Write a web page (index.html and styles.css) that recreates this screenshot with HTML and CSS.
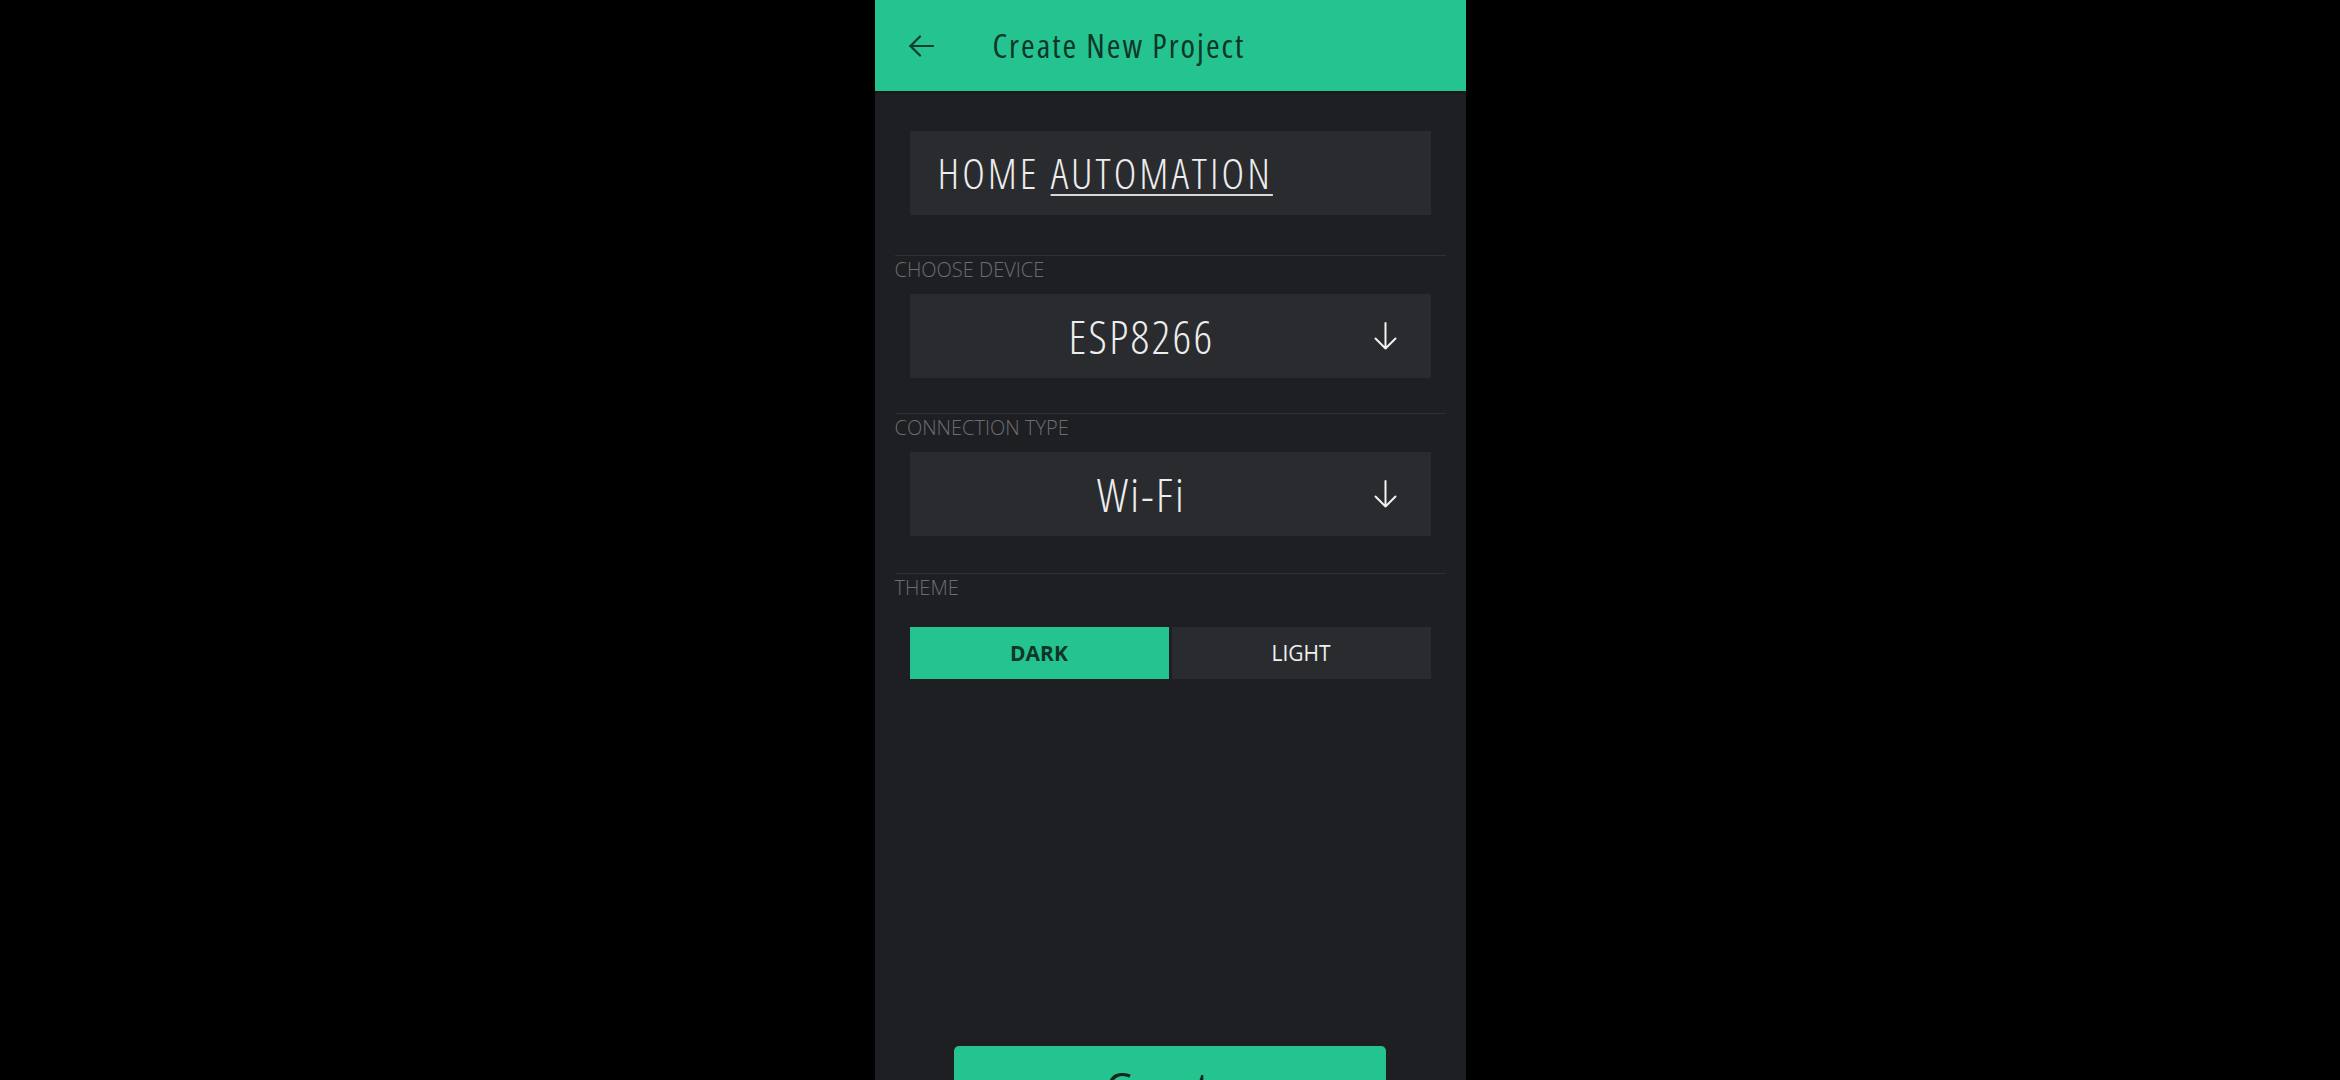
FILE: index.html
```html
<!DOCTYPE html>
<html lang="en">
<head>
<meta charset="utf-8">
<title>Create New Project</title>
<link rel="stylesheet" href="styles.css">
</head>
<body>
<div class="phone">
  <header class="appbar">
    <svg class="back" width="26" height="22" viewBox="0 0 26 22" aria-hidden="true">
      <path d="M25 11H2M12 1.5L2.5 11l9.5 9.5" fill="none" stroke="#0f3b2c" stroke-width="2.2" stroke-linecap="round" stroke-linejoin="round"/>
    </svg>
    <h1 class="title">Create New Project</h1>
  </header>

  <main class="content">
    <div class="field name-field"><span class="name-text">HOME <u class="auto">AUTOMATION</u></span></div>

    <section class="section">
      <div class="label">CHOOSE DEVICE</div>
      <div class="field select">
        <span class="select-text">ESP8266</span>
        <svg class="down" width="23" height="28" viewBox="0 0 23 28" aria-hidden="true">
          <path d="M11.5 1v25.5M1.5 16.5l10 10 10-10" fill="none" stroke="#f2f2f2" stroke-width="2" stroke-linecap="round" stroke-linejoin="round"/>
        </svg>
      </div>
    </section>

    <section class="section">
      <div class="label">CONNECTION TYPE</div>
      <div class="field select">
        <span class="select-text">Wi-Fi</span>
        <svg class="down" width="23" height="28" viewBox="0 0 23 28" aria-hidden="true">
          <path d="M11.5 1v25.5M1.5 16.5l10 10 10-10" fill="none" stroke="#f2f2f2" stroke-width="2" stroke-linecap="round" stroke-linejoin="round"/>
        </svg>
      </div>
    </section>

    <section class="section last">
      <div class="label">THEME</div>
      <div class="toggle">
        <div class="opt active">DARK</div>
        <div class="opt">LIGHT</div>
      </div>
    </section>
  </main>

  <footer class="footer">
    <div class="create">Create</div>
  </footer>
</div>
</body>
</html>
```

FILE: styles.css
```css
html, body {
  margin: 0;
  padding: 0;
  background: #000;
  height: 100%;
}
body {
  display: flex;
  justify-content: center;
  font-family: "Open Sans", "DejaVu Sans", sans-serif;
}
.phone {
  width: 591px;
  height: 1080px;
  background: #1e1f23;
  display: flex;
  flex-direction: column;
  overflow: hidden;
}
.appbar {
  height: 91px;
  flex: none;
  background: #25c390;
  display: flex;
  align-items: center;
  padding-left: 33px;
  box-shadow: 0 1px 2px rgba(0,0,0,0.5);
}
.back { flex: none; }
.title {
  margin: 0 0 0 59px;
  font-weight: 400;
  font-size: 33px;
  font-stretch: 75%;
  letter-spacing: 2px;
  color: #0d3628;
}
.content {
  flex: 1;
  padding: 0 20px;
  display: flex;
  flex-direction: column;
}
.field {
  background: #2a2b2f;
  height: 84px;
  margin: 0 15px;
  display: flex;
  align-items: center;
  color: #ededed;
  font-weight: 340;
  font-stretch: 75%;
}
.name-field {
  margin-top: 40px;
  margin-bottom: 40px;
  padding-left: 28px;
  font-size: 43px;
  letter-spacing: 3px;
}
.name-text { margin-top: -1px; }
.auto {
  text-decoration: underline;
  text-decoration-thickness: 2px;
  text-underline-offset: 5px;
  text-decoration-color: #d8d8d8;
}
.select {
  font-size: 46px;
  letter-spacing: 2.3px;
}
.section {
  border-top: 1px solid #2f3034;
}
.label {
  height: 24px;
  line-height: 27px;
  font-size: 20px;
  font-weight: 350;
  color: #6c6d71;
  margin-bottom: 14px;
}
.section:nth-of-type(1) { margin-bottom: 35px; }
.section:nth-of-type(2) { margin-bottom: 37px; }
.section.last .label { margin-bottom: 29px; }
.select-text {
  flex: 1;
  text-align: center;
}
.down {
  flex: none;
  margin-right: 34px;
}
.toggle {
  margin: 0 15px;
  height: 52px;
  display: flex;
  gap: 3px;
}
.opt {
  flex: 1;
  display: flex;
  align-items: center;
  justify-content: center;
  font-size: 21px;
  background: #2a2b2f;
  color: #f0f0f0;
}
.opt.active {
  background: #25c390;
  color: #0d3628;
  font-weight: 700;
  font-stretch: 90%;
}
.footer {
  height: 34px;
  flex: none;
  display: flex;
  justify-content: center;
  align-items: flex-start;
}
.create {
  width: 432px;
  height: 80px;
  flex: none;
  background: #25c390;
  border-radius: 5px;
  text-align: center;
  color: #16261f;
  font-size: 42px;
  padding-top: 16px;
  box-sizing: border-box;
  line-height: 1.2;
}
```
